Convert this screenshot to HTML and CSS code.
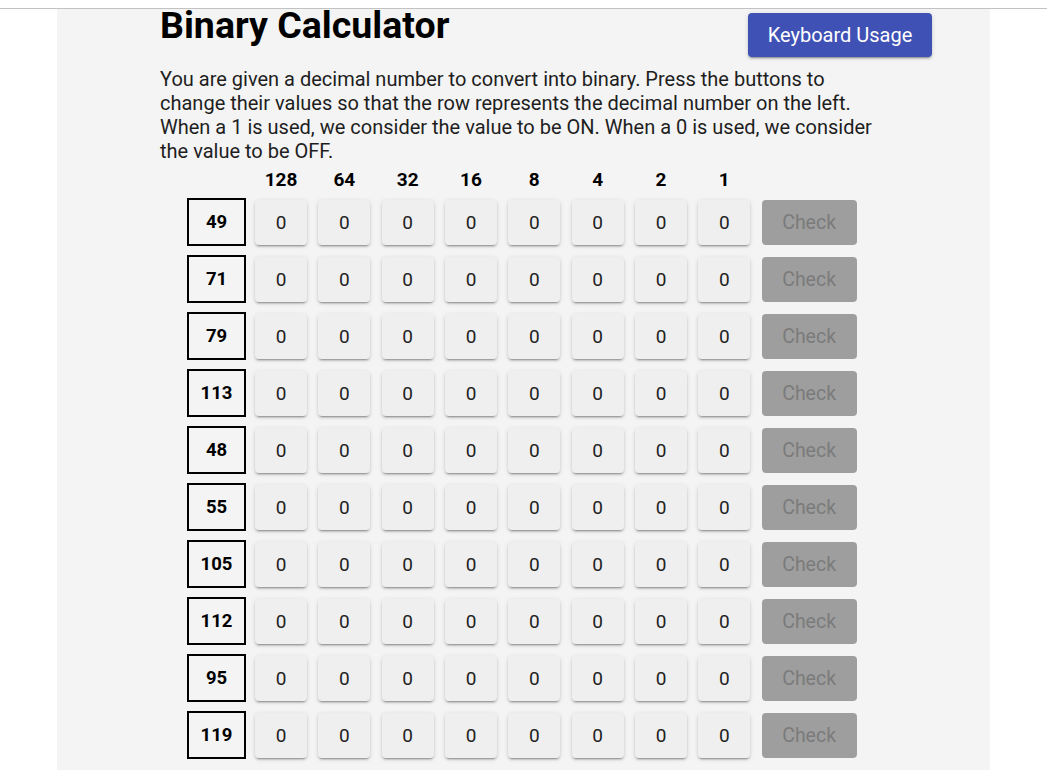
FILE: index.html
```html
<!DOCTYPE html>
<html lang="en">
<head>
<meta charset="utf-8">
<title>Binary Calculator</title>
<link rel="stylesheet" href="styles.css">
</head>
<body>
<div class="topbar"></div>
<main class="panel">
  <header class="head">
    <h1 class="title">Binary Calculator</h1>
    <button class="kbd-btn">Keyboard Usage</button>
  </header>
  <p class="intro">You are given a decimal number to convert into binary. Press the buttons to change their values so that the row represents the decimal number on the left. When a 1 is used, we consider the value to be ON. When a 0 is used, we consider the value to be OFF.</p>
  <div class="table">
    <div class="labels">
      <span class="spacer"></span>
      <span class="lbl">128</span><span class="lbl">64</span><span class="lbl">32</span><span class="lbl">16</span><span class="lbl">8</span><span class="lbl">4</span><span class="lbl">2</span><span class="lbl">1</span>
    </div>
    <div class="row"><span class="dec">49</span><button class="bit">0</button><button class="bit">0</button><button class="bit">0</button><button class="bit">0</button><button class="bit">0</button><button class="bit">0</button><button class="bit">0</button><button class="bit">0</button><button class="check" disabled>Check</button></div>
    <div class="row"><span class="dec">71</span><button class="bit">0</button><button class="bit">0</button><button class="bit">0</button><button class="bit">0</button><button class="bit">0</button><button class="bit">0</button><button class="bit">0</button><button class="bit">0</button><button class="check" disabled>Check</button></div>
    <div class="row"><span class="dec">79</span><button class="bit">0</button><button class="bit">0</button><button class="bit">0</button><button class="bit">0</button><button class="bit">0</button><button class="bit">0</button><button class="bit">0</button><button class="bit">0</button><button class="check" disabled>Check</button></div>
    <div class="row"><span class="dec">113</span><button class="bit">0</button><button class="bit">0</button><button class="bit">0</button><button class="bit">0</button><button class="bit">0</button><button class="bit">0</button><button class="bit">0</button><button class="bit">0</button><button class="check" disabled>Check</button></div>
    <div class="row"><span class="dec">48</span><button class="bit">0</button><button class="bit">0</button><button class="bit">0</button><button class="bit">0</button><button class="bit">0</button><button class="bit">0</button><button class="bit">0</button><button class="bit">0</button><button class="check" disabled>Check</button></div>
    <div class="row"><span class="dec">55</span><button class="bit">0</button><button class="bit">0</button><button class="bit">0</button><button class="bit">0</button><button class="bit">0</button><button class="bit">0</button><button class="bit">0</button><button class="bit">0</button><button class="check" disabled>Check</button></div>
    <div class="row"><span class="dec">105</span><button class="bit">0</button><button class="bit">0</button><button class="bit">0</button><button class="bit">0</button><button class="bit">0</button><button class="bit">0</button><button class="bit">0</button><button class="bit">0</button><button class="check" disabled>Check</button></div>
    <div class="row"><span class="dec">112</span><button class="bit">0</button><button class="bit">0</button><button class="bit">0</button><button class="bit">0</button><button class="bit">0</button><button class="bit">0</button><button class="bit">0</button><button class="bit">0</button><button class="check" disabled>Check</button></div>
    <div class="row"><span class="dec">95</span><button class="bit">0</button><button class="bit">0</button><button class="bit">0</button><button class="bit">0</button><button class="bit">0</button><button class="bit">0</button><button class="bit">0</button><button class="bit">0</button><button class="check" disabled>Check</button></div>
    <div class="row"><span class="dec">119</span><button class="bit">0</button><button class="bit">0</button><button class="bit">0</button><button class="bit">0</button><button class="bit">0</button><button class="bit">0</button><button class="bit">0</button><button class="bit">0</button><button class="check" disabled>Check</button></div>
  </div>
</main>
</body>
</html>
```
FILE: styles.css
```css
html, body {
  margin: 0;
  padding: 0;
  background: #ffffff;
  font-family: Roboto, "Liberation Sans", sans-serif;
  color: #212121;
  overflow: hidden;
}

.topbar {
  height: 8px;
  border-bottom: 1px solid #c2c2c2;
}

.panel {
  margin-left: 57px;
  width: 933px;
  min-height: 800px;
  background: #f4f4f4;
  box-sizing: border-box;
  padding: 0 58px 0 103px;
}

.head {
  display: flex;
  justify-content: space-between;
  align-items: flex-start;
}

.title {
  margin: 0;
  font-size: 37.5px;
  line-height: 32px;
  font-weight: 700;
  color: #000;
}

.kbd-btn {
  margin-top: 4px;
  height: 44px;
  width: 184px;
  border: none;
  border-radius: 4px;
  background: #3f51b5;
  color: #fff;
  font-family: Roboto, "Liberation Sans", sans-serif;
  font-size: 20px;
  box-shadow: 0 3px 1px -2px rgba(0,0,0,.2), 0 2px 2px 0 rgba(0,0,0,.14), 0 1px 5px 0 rgba(0,0,0,.12);
}

.intro {
  margin: 10px 0 0 0;
  width: 720px;
  font-size: 20px;
  line-height: 24px;
  color: #1e1e1e;
}

.table {
  margin-left: 27px;
  margin-top: 4px;
}

.labels {
  display: flex;
  height: 24px;
  align-items: center;
  margin-bottom: 7px;
}

.spacer {
  width: 68px;
}

.lbl {
  width: 52px;
  margin-right: 11.33px;
  text-align: center;
  font-size: 19px;
  font-weight: 700;
  color: #000;
}

.row {
  display: flex;
  align-items: center;
  height: 48px;
  margin-bottom: 9px;
}

.dec {
  box-sizing: border-box;
  width: 59px;
  height: 48px;
  border: 2px solid #000;
  margin-right: 9px;
  display: flex;
  align-items: center;
  justify-content: center;
  font-size: 18.5px;
  font-weight: 700;
  color: #000;
}

.bit {
  width: 52px;
  height: 45px;
  margin-right: 11.33px;
  border: none;
  border-radius: 4px;
  background: #efefef;
  color: #222;
  font-family: Roboto, "Liberation Sans", sans-serif;
  font-size: 19px;
  padding: 0;
  box-shadow: 0 3px 1px -2px rgba(0,0,0,.2), 0 2px 2px 0 rgba(0,0,0,.14), 0 1px 5px 0 rgba(0,0,0,.12);
}

.check {
  width: 95px;
  height: 45px;
  border: none;
  border-radius: 4px;
  background: #9e9e9e;
  color: #7b7b7b;
  font-family: Roboto, "Liberation Sans", sans-serif;
  font-size: 19.5px;
  padding: 0;
}
```
